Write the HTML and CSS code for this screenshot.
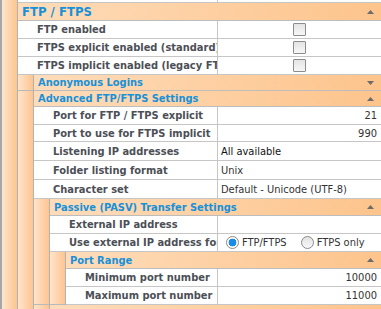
FILE: index.html
```html
<!DOCTYPE html>
<html>
<head>
<meta charset="utf-8">
<link rel="stylesheet" href="styles.css">
</head>
<body>
<div class="grid">
  <div class="group">
    <div class="gutter"></div>
    <div class="col">
      <div class="row h3"><div class="name"></div><div class="val"></div></div>
      <div class="cat top h18"><span class="cat-text">FTP / FTPS</span><svg class="arrow" width="7" height="4" viewBox="0 0 7 4"><polygon points="0,4 7,4 3.5,0" /></svg></div>
      <div class="row h18"><div class="name">FTP enabled</div><div class="val center"><span class="check"></span></div></div>
      <div class="row h18"><div class="name">FTPS explicit enabled (standard)</div><div class="val center"><span class="check"></span></div></div>
      <div class="row h18"><div class="name">FTPS implicit enabled (legacy FTPS)</div><div class="val center"><span class="check"></span></div></div>
      <div class="group">
        <div class="gutter"></div>
        <div class="col">
          <div class="cat h16"><span class="cat-text">Anonymous Logins</span><svg class="arrow" width="7" height="4" viewBox="0 0 7 4"><polygon points="0,0 7,0 3.5,4" /></svg></div>
        </div>
      </div>
      <div class="group">
        <div class="gutter"></div>
        <div class="col">
          <div class="cat h16"><span class="cat-text">Advanced FTP/FTPS Settings</span><svg class="arrow" width="7" height="4" viewBox="0 0 7 4"><polygon points="0,4 7,4 3.5,0" /></svg></div>
          <div class="row h18"><div class="name">Port for FTP / FTPS explicit</div><div class="val num">21</div></div>
          <div class="row h17"><div class="name">Port to use for FTPS implicit</div><div class="val num">990</div></div>
          <div class="row h19"><div class="name">Listening IP addresses</div><div class="val text dark">All available</div></div>
          <div class="row h19"><div class="name">Folder listing format</div><div class="val text">Unix</div></div>
          <div class="row h19"><div class="name">Character set</div><div class="val text">Default - Unicode (UTF-8)</div></div>
          <div class="group">
            <div class="gutter"></div>
            <div class="col">
              <div class="cat h17"><span class="cat-text">Passive (PASV) Transfer Settings</span><svg class="arrow" width="7" height="4" viewBox="0 0 7 4"><polygon points="0,4 7,4 3.5,0" /></svg></div>
              <div class="row h18"><div class="name">External IP address</div><div class="val text"></div></div>
              <div class="row h18"><div class="name">Use external IP address for</div><div class="val radios">
                <span class="radio on"></span><span class="rlabel">FTP/FTPS</span>
                <span class="radio off"></span><span class="rlabel">FTPS only</span>
              </div></div>
              <div class="group">
                <div class="gutter"></div>
                <div class="col">
                  <div class="cat h17"><span class="cat-text">Port Range</span><svg class="arrow" width="7" height="4" viewBox="0 0 7 4"><polygon points="0,4 7,4 3.5,0" /></svg></div>
                  <div class="row h18"><div class="name">Minimum port number</div><div class="val num">10000</div></div>
                  <div class="row h18"><div class="name">Maximum port number</div><div class="val num">11000</div></div>
                </div>
              </div>
            </div>
          </div>
          <div class="group">
            <div class="gutter"></div>
            <div class="col">
              <div class="cat h17"></div>
            </div>
          </div>
        </div>
      </div>
    </div>
  </div>
</div>
</body>
</html>
```

FILE: styles.css
```css
* { box-sizing: border-box; }

html, body {
  margin: 0;
  padding: 0;
  background: #ffffff;
  width: 381px;
  height: 309px;
  overflow: hidden;
}

body {
  font-family: "DejaVu Sans Condensed", "DejaVu Sans", sans-serif;
  font-stretch: condensed;
  font-size: 11px;
}

.grid {
  width: 381px;
  border-left: 2px solid #a6a6a6;
}

.group {
  display: flex;
}

.gutter {
  width: 16px;
  flex: none;
  background: linear-gradient(to right, #ffe5cb, #fcc590);
  border-right: 1px solid #b3b3b3;
  border-bottom: 1px solid #b9b9b9;
}

.col {
  flex: 1;
  min-width: 0;
}

.h3 { height: 3px; }
.h16 { height: 16px; }
.h17 { height: 17px; }
.h18 { height: 18px; }
.h19 { height: 19px; }

.cat {
  display: flex;
  align-items: center;
  background: linear-gradient(to right, #fedcba, #fdc48c);
  border-bottom: 1px solid #bdbdbd;
  padding-left: 4px;
  padding-right: 7px;
  overflow: hidden;
  white-space: nowrap;
}

.cat-text {
  color: #1791d9;
  font-weight: bold;
  font-size: 11px;
}

.cat.top .cat-text {
  font-size: 13px;
}

.arrow {
  margin-left: auto;
  flex: none;
  fill: #6b6b6b;
}

.row {
  display: flex;
  background: #ffffff;
  border-bottom: 1px solid #c6c6c6;
  overflow: hidden;
}

.name {
  flex: 1;
  min-width: 0;
  overflow: hidden;
  white-space: nowrap;
  padding-left: 19px;
  display: flex;
  align-items: center;
  font-weight: bold;
  color: #4c4f56;
}

.val {
  width: 164px;
  flex: none;
  border-left: 1px solid #c6c6c6;
  display: flex;
  align-items: center;
  white-space: nowrap;
  overflow: hidden;
  color: #333333;
}

.val.center { justify-content: center; }

.val.num {
  justify-content: flex-end;
  padding-right: 4px;
}

.val.text { padding-left: 3px; }
.val.dark { color: #111111; }

.check {
  width: 13px;
  height: 13px;
  border: 1px solid #8c8c8c;
  border-radius: 1px;
  background: linear-gradient(#e4e4e4, #f7f7f7);
}

.val.radios { padding-left: 8px; }

.radio {
  width: 13px;
  height: 13px;
  border-radius: 50%;
  border: 1px solid #8a8a8a;
  flex: none;
}

.radio.on {
  background: radial-gradient(circle, #1a8ce8 0, #1a8ce8 3.6px, #ffffff 4.2px);
}

.radio.off {
  background: linear-gradient(#e2e2e2, #f8f8f8);
}

.rlabel {
  margin-left: 3px;
  margin-right: 14px;
  color: #333333;
}
```
